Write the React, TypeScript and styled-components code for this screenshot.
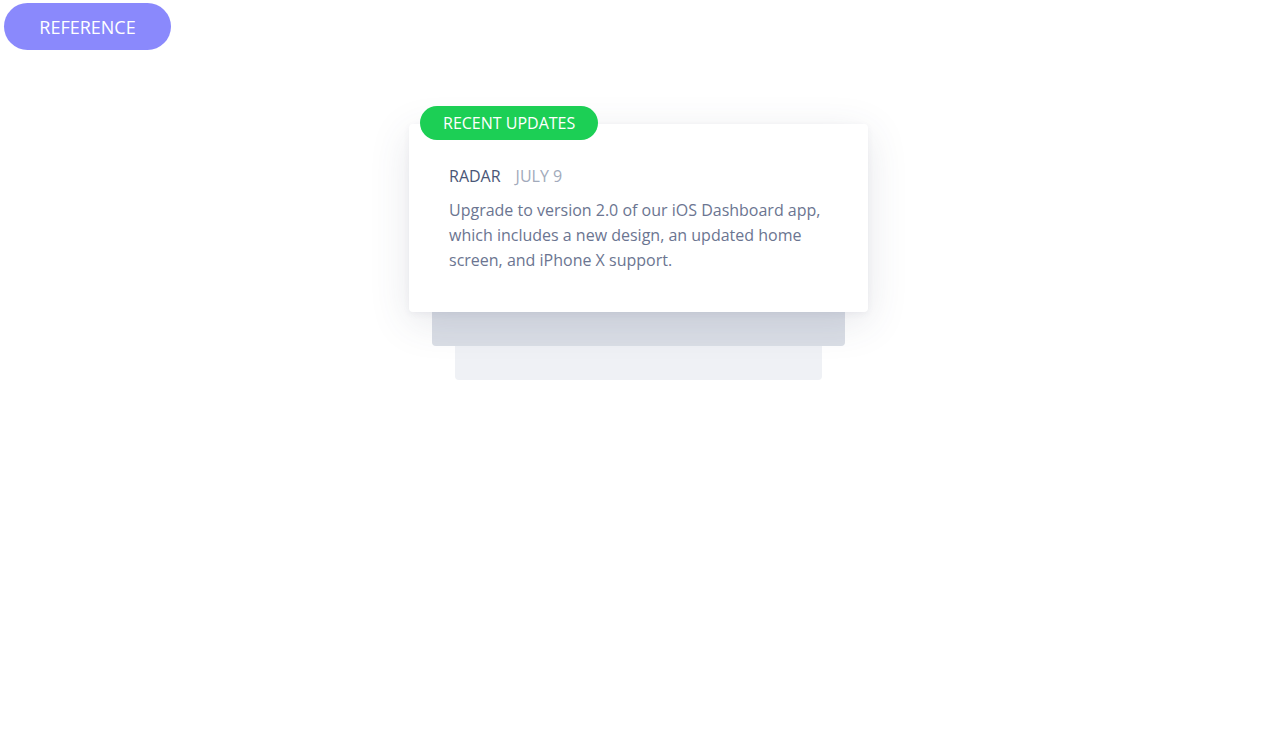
import styled, { createGlobalStyle } from 'styled-components'

const GlobalStyle = createGlobalStyle`
  html, body {
    margin: 0;
    padding: 0;
    background: #ffffff;
    font-family: 'Open Sans', 'Noto Sans', sans-serif;
  }
`

const Page = styled.div`
  min-height: 733px;
  padding: 3px 0 0 4px;
  box-sizing: border-box;
  display: flex;
  flex-direction: column;
`

const RefButton = styled.button`
  align-self: flex-start;
  width: 167px;
  height: 47px;
  border: none;
  border-radius: 24px;
  background: #8a89fc;
  color: #ffffff;
  font-family: inherit;
  font-size: 18px;
  cursor: pointer;
`

const Stack = styled.div`
  margin-top: 74px;
  align-self: center;
  display: flex;
  flex-direction: column;
  align-items: center;
  width: 459px;
  margin-left: -7px;
`

const Card = styled.div`
  position: relative;
  z-index: 3;
  width: 100%;
  box-sizing: border-box;
  padding: 40px 40px 39px;
  background: #ffffff;
  border-radius: 4px;
  box-shadow: 0 10px 40px rgba(60, 70, 100, 0.13), 0 2px 6px rgba(60, 70, 100, 0.06);
`

const Badge = styled.div`
  position: absolute;
  top: -18px;
  left: 11px;
  height: 34px;
  padding: 0 23px;
  display: flex;
  align-items: center;
  border-radius: 17px;
  background: #1ccf55;
  color: #ffffff;
  font-size: 16px;
`

const Meta = styled.div`
  display: flex;
  gap: 15px;
  font-size: 16px;
  line-height: 25px;
`

const Product = styled.span`
  color: #4a5677;
`

const DateLabel = styled.span`
  color: #a2aabb;
`

const Body = styled.p`
  margin: 9px 0 0;
  font-size: 16px;
  line-height: 25px;
  color: #6b7591;
`

const Layer = styled.div<{ $width: number; $color: string; $z: number }>`
  position: relative;
  z-index: ${(p) => p.$z};
  width: ${(p) => p.$width}px;
  height: 34px;
  background: ${(p) => p.$color};
  border-radius: 0 0 4px 4px;
`

export default function App() {
  return (
    <>
      <GlobalStyle />
      <Page>
        <RefButton>REFERENCE</RefButton>
        <Stack>
          <Card>
            <Badge>RECENT UPDATES</Badge>
            <Meta>
              <Product>RADAR</Product>
              <DateLabel>JULY 9</DateLabel>
            </Meta>
            <Body>
              Upgrade to version 2.0 of our iOS Dashboard app, which includes a new design, an
              updated home screen, and iPhone X support.
            </Body>
          </Card>
          <Layer $width={413} $color="#dadee6" $z={2} />
          <Layer $width={367} $color="#eff1f5" $z={1} />
        </Stack>
      </Page>
    </>
  )
}
